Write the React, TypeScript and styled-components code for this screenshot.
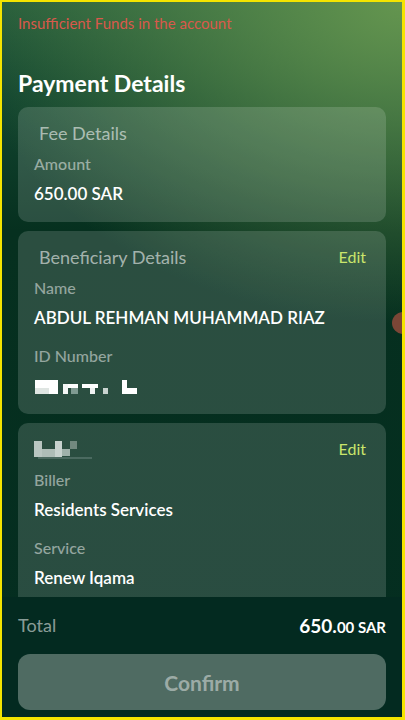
import React from "react";
import styled, { createGlobalStyle } from "styled-components";

const GlobalStyle = createGlobalStyle`
  html, body {
    margin: 0;
    padding: 0;
    background: #032a20;
  }
  * {
    box-sizing: border-box;
  }
`;

const Frame = styled.div`
  position: relative;
  width: 405px;
  height: 720px;
  display: flex;
  flex-direction: column;
  overflow: hidden;
  border-style: solid;
  border-color: #f4e400;
  border-width: 2px 3px 3px 2px;
  font-family: Lato, "Open Sans", sans-serif;
  color: #ffffff;
  background:
    radial-gradient(ellipse 110% 45% at 100% 0%, #64954f 0%, #41764a00 100%),
    linear-gradient(180deg, #265c3b 0%, #134630 13%, #06301f 32%, #042d20 100%);
`;

const Scroll = styled.main`
  flex: 1;
  min-height: 0;
  overflow: hidden;
  padding: 11px 16px 0 16px;
  display: flex;
  flex-direction: column;
`;

const ErrorText = styled.p`
  margin: 0;
  font-size: 15px;
  line-height: 20px;
  color: #d9594b;
`;

const Heading = styled.h1`
  margin: 36px 0 10px;
  font-size: 23px;
  line-height: 28px;
  font-weight: 700;
`;

const CardList = styled.div`
  display: flex;
  flex-direction: column;
  gap: 9px;
`;

const Card = styled.section`
  border-radius: 10px;
  background: rgba(255, 255, 255, 0.15);
  padding: 14px 20px 17px 16px;
  flex-shrink: 0;
`;

const CardHeader = styled.div`
  display: flex;
  align-items: center;
  justify-content: space-between;
  height: 24px;
`;

const CardTitle = styled.h3`
  margin: 0 0 0 5px;
  font-size: 18px;
  line-height: 24px;
  font-weight: 400;
  color: rgba(255, 255, 255, 0.58);
`;

const EditLink = styled.button`
  border: 0;
  background: none;
  padding: 0;
  font-family: inherit;
  font-size: 16px;
  line-height: 22px;
  color: #c9e56b;
`;

const Field = styled.div<{ $first?: boolean }>`
  display: flex;
  flex-direction: column;
  gap: 8px;
  margin-top: ${({ $first }) => ($first ? "8px" : "16px")};
`;

const Label = styled.span`
  font-size: 16px;
  line-height: 22px;
  font-weight: 500;
  color: rgba(255, 255, 255, 0.5);
`;

const Value = styled.span`
  font-size: 17px;
  line-height: 22px;
  font-weight: 600;
  color: #ffffff;
`;

const Redacted = styled.svg`
  display: block;
  height: 22px;
`;

const Footer = styled.footer`
  flex-shrink: 0;
  background: #032a20;
  padding: 16px 16px 7px 16px;
  display: flex;
  flex-direction: column;
  gap: 17px;
`;

const TotalRow = styled.div`
  display: flex;
  align-items: center;
  justify-content: space-between;
  height: 24px;
`;

const TotalLabel = styled.span`
  font-size: 18px;
  color: rgba(255, 255, 255, 0.55);
`;

const TotalAmount = styled.span`
  font-weight: 700;
  font-size: 19px;
  color: #ffffff;

  small {
    font-size: 15px;
  }
`;

const ConfirmButton = styled.button`
  height: 56px;
  width: 100%;
  border: 0;
  border-radius: 12px;
  background: #4f6b62;
  font-family: inherit;
  font-size: 21px;
  font-weight: 700;
  color: rgba(255, 255, 255, 0.45);
`;

const SideHandle = styled.div`
  position: absolute;
  right: -12px;
  top: 310px;
  width: 22px;
  height: 22px;
  border-radius: 50%;
  background: #7b4636;
`;

type Block = [number, number, number, number, string];

const idBlocks: Block[] = [
  [1, 0, 23, 8, "#ffffff"],
  [1, 8, 14, 6, "#dfe5e2"],
  [15, 8, 9, 6, "#ffffff"],
  [29, 4, 5, 10, "#f4f6f5"],
  [34, 4, 10, 4, "#ffffff"],
  [37, 8, 7, 6, "#7f9a91"],
  [48, 4, 16, 4, "#ffffff"],
  [56, 8, 5, 6, "#f0f3f2"],
  [69, 8, 5, 6, "#c9d3cf"],
  [88, 0, 5, 14, "#ffffff"],
  [93, 8, 10, 6, "#ffffff"],
];

const titleBlocks: Block[] = [
  [0, 0, 8, 16, "#b9c6c1"],
  [8, 8, 13, 8, "#aebdb7"],
  [21, 0, 7, 16, "#c7d2ce"],
  [28, 8, 8, 7, "#9fb1aa"],
  [36, 0, 7, 8, "#72897f"],
  [4, 16, 54, 2, "#4b6a60"],
];

const Pixelated: React.FC<{ blocks: Block[]; width: number; offset: number }> = ({
  blocks,
  width,
  offset,
}) => (
  <Redacted width={width} viewBox={`0 0 ${width} 22`}>
    {blocks.map(([x, y, w, h, c], i) => (
      <rect key={i} x={x} y={y + offset} width={w} height={h} fill={c} />
    ))}
  </Redacted>
);

export default function App() {
  return (
    <>
      <GlobalStyle />
      <Frame>
        <Scroll>
          <ErrorText>Insufficient Funds in the account</ErrorText>
          <Heading>Payment Details</Heading>
          <CardList>
            <Card>
              <CardHeader>
                <CardTitle>Fee Details</CardTitle>
              </CardHeader>
              <Field $first>
                <Label>Amount</Label>
                <Value>650.00 SAR</Value>
              </Field>
            </Card>

            <Card>
              <CardHeader>
                <CardTitle>Beneficiary Details</CardTitle>
                <EditLink>Edit</EditLink>
              </CardHeader>
              <Field $first>
                <Label>Name</Label>
                <Value>ABDUL REHMAN MUHAMMAD RIAZ</Value>
              </Field>
              <Field>
                <Label>ID Number</Label>
                <Pixelated blocks={idBlocks} width={110} offset={5} />
              </Field>
            </Card>

            <Card>
              <CardHeader>
                <Pixelated blocks={titleBlocks} width={60} offset={3} />
                <EditLink>Edit</EditLink>
              </CardHeader>
              <Field $first>
                <Label>Biller</Label>
                <Value>Residents Services</Value>
              </Field>
              <Field>
                <Label>Service</Label>
                <Value>Renew Iqama</Value>
              </Field>
            </Card>
          </CardList>
        </Scroll>

        <Footer>
          <TotalRow>
            <TotalLabel>Total</TotalLabel>
            <TotalAmount>
              650.<small>00 SAR</small>
            </TotalAmount>
          </TotalRow>
          <ConfirmButton>Confirm</ConfirmButton>
        </Footer>
        <SideHandle />
      </Frame>
    </>
  );
}
